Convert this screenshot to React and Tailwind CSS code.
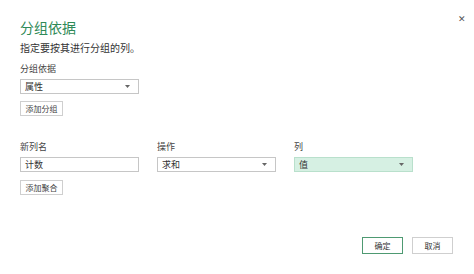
import React from 'react';

const font = { fontFamily: '"Noto Sans CJK SC", "Noto Sans", sans-serif' };

function Caret() {
  return (
    <svg width="5" height="3" viewBox="0 0 5 3" className="shrink-0">
      <path d="M0 0 L5 0 L2.5 3 Z" fill="#666" />
    </svg>
  );
}

function Select({ value, active }) {
  return (
    <div
      className={`flex h-[15px] w-[119px] items-center justify-between border pl-[4px] pr-[8px] text-[9px] leading-none text-[#333] ${
        active ? 'border-[#b9e0cc] bg-[#d6f0e3]' : 'border-[#c6c6c6] bg-white'
      }`}
    >
      <span>{value}</span>
      <Caret />
    </div>
  );
}

function Input({ value }) {
  return (
    <div className="flex h-[15px] w-[119px] items-center border border-[#c6c6c6] bg-white pl-[4px] text-[9px] leading-none text-[#333]">
      {value}
    </div>
  );
}

function SmallButton({ children }) {
  return (
    <div className="flex h-[15px] w-[43px] items-center justify-center border border-[#cfcfcf] bg-white text-[8px] leading-none text-[#444]">
      {children}
    </div>
  );
}

export default function App() {
  return (
    <div style={font} className="relative h-[274px] w-[474px] overflow-hidden bg-white px-5">
      <div className="absolute right-[8px] top-[14px] text-[9px] leading-none text-[#555]">✕</div>

      <div className="pt-[19px] text-[14px] leading-[16px] text-[#2f8a57]">分组依据</div>
      <div className="mt-[7px] text-[10px] leading-[12px] text-[#333]">指定要按其进行分组的列。</div>

      <div className="mt-[9px] text-[9px] leading-[11px] text-[#444]">分组依据</div>
      <div className="mt-[5px]">
        <Select value="属性" />
      </div>
      <div className="mt-[7px]">
        <SmallButton>添加分组</SmallButton>
      </div>

      <div className="mt-[25px] grid grid-cols-[119px_119px_119px] gap-x-[18px] gap-y-[5px]">
        <div className="text-[9px] leading-[11px] text-[#444]">新列名</div>
        <div className="text-[9px] leading-[11px] text-[#444]">操作</div>
        <div className="text-[9px] leading-[11px] text-[#444]">列</div>
        <Input value="计数" />
        <Select value="求和" />
        <Select value="值" active />
      </div>
      <div className="mt-[8px]">
        <SmallButton>添加聚合</SmallButton>
      </div>

      <div className="mt-[42px] flex justify-end gap-[9px] pr-[1px]">
        <div className="flex h-[17px] w-[41px] items-center justify-center border border-[#4e9a72] bg-white text-[8px] leading-none text-[#333]">
          确定
        </div>
        <div className="flex h-[17px] w-[41px] items-center justify-center border border-[#cfcfcf] bg-white text-[8px] leading-none text-[#333]">
          取消
        </div>
      </div>
    </div>
  );
}
